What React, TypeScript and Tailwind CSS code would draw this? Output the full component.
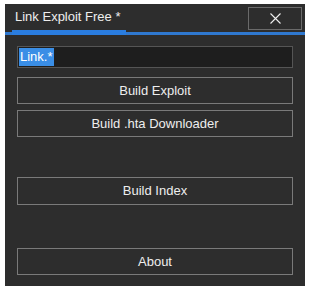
const buttons = [
  { label: "Build Exploit", gap: "mt-[9px]", h: "h-[27px]" },
  { label: "Build .hta Downloader", gap: "mt-[6px]", h: "h-[27px]" },
  { label: "Build Index", gap: "mt-[40px]", h: "h-[28px]" },
  { label: "About", gap: "mt-[43px]", h: "h-[27px]" },
]

export default function App() {
  return (
    <div
      className="w-[310px] h-[290px] bg-white pt-[4px] pl-[5px]"
      style={{ fontFamily: '"Liberation Sans", Arial, sans-serif' }}
    >
      <div className="w-[300px] h-[282px] bg-[#2d2d2d] flex flex-col text-[#eeeeee]">
        {/* title bar */}
        <div className="h-[26px] flex items-start justify-between">
          <span className="pl-[10px] pt-[5px] text-[13px] leading-[16px]">Link Exploit Free *</span>
          <button className="mt-[3px] mr-[3px] w-[54px] h-[23px] border border-[#6a6a6a] flex items-center justify-center">
            <svg width="11" height="11" viewBox="0 0 11 11" stroke="#eeeeee" strokeWidth="1.1" fill="none">
              <path d="M0.5 0.5 L10.5 10.5 M10.5 0.5 L0.5 10.5" />
            </svg>
          </button>
        </div>
        <div className="h-[5px] flex items-end">
          <div className="w-[7px] h-[3px] bg-[#2f78cf]" />
          <div className="w-[114px] h-[5px] bg-[#2a7de0]" />
          <div className="flex-1 h-[3px] bg-[#2f78cf]" />
        </div>

        {/* body */}
        <div className="px-[12px] flex flex-col">
          <div className="mt-[11px] h-[22px] bg-[#1e1e1e] border border-[#555555] flex items-center pl-[1px]">
            <span className="bg-[#3a8ee6] text-white text-[13px] leading-[18px] px-[1px]">Link.*</span>
          </div>
          {buttons.map((b) => (
            <button
              key={b.label}
              className={`${b.gap} ${b.h} border border-[#7a7a7a] bg-[#2d2d2d] text-[13px] text-[#eeeeee] flex items-center justify-center`}
            >
              {b.label}
            </button>
          ))}
        </div>
      </div>
    </div>
  )
}
